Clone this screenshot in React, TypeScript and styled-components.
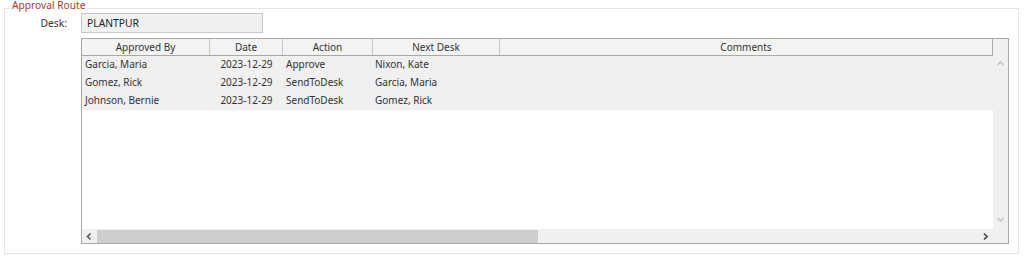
import React from "react";
import styled, { createGlobalStyle } from "styled-components";

const Global = createGlobalStyle`
  html, body { margin: 0; padding: 0; background: #fff; }
  body { font-family: "Noto Sans", "Open Sans", sans-serif; font-size: 10px; color: #333; }
`;

const Section = styled.div`
  position: relative;
  box-sizing: border-box;
  margin: 8px 5px 0 4px;
  height: 246px;
  border: 1px solid #e4e4e4;
  padding: 4px 0 0 0;
`;

const Legend = styled.span`
  position: absolute;
  top: -11px;
  left: 5px;
  padding: 0 2px;
  background: #fff;
  color: #a33a33;
  font-size: 10.2px;
  line-height: 15px;
`;

const DeskRow = styled.div`
  display: flex;
  align-items: center;
  height: 20px;
`;

const Label = styled.div`
  width: 62px;
  text-align: right;
  margin-right: 14px;
  color: #333;
  font-size: 10.3px;
`;

const Input = styled.div`
  box-sizing: border-box;
  width: 182px;
  height: 20px;
  background: #f0f0f0;
  border: 1px solid #c8c8c8;
  padding-left: 5px;
  line-height: 18px;
  color: #222;
  font-size: 10.3px;
`;

const GridBox = styled.div`
  box-sizing: border-box;
  margin: 5px 0 0 76px;
  width: 928px;
  height: 206px;
  border: 1px solid #a8a8a8;
  display: grid;
  grid-template-columns: 1fr 15px;
  grid-template-rows: 1fr 14px;
  background: #fff;
`;

const Main = styled.div`
  display: flex;
  flex-direction: column;
  overflow: hidden;
`;

const cols = "128px 73px 90px 127px 1fr";

const HeaderRow = styled.div`
  display: grid;
  grid-template-columns: ${cols};
  height: 16px;
  background: #f3f3f3;
  border-bottom: 1px solid #a8a8a8;
`;

const HeaderCell = styled.div<{ $last?: boolean }>`
  text-align: center;
  line-height: 16px;
  border-right: 1px solid ${(p) => (p.$last ? "#a8a8a8" : "#c8c8c8")};
  color: #333;
`;

const Row = styled.div`
  display: grid;
  grid-template-columns: ${cols};
  height: 18px;
  background: #f0f0f0;
`;

const Cell = styled.div<{ $center?: boolean; $pad?: number }>`
  line-height: 17px;
  padding-left: ${(p) => (p.$center ? 0 : p.$pad ?? 3)}px;
  text-align: ${(p) => (p.$center ? "center" : "left")};
  white-space: nowrap;
  color: #333;
`;

const VScroll = styled.div`
  background: #f0f0f0;
  display: flex;
  flex-direction: column;
  justify-content: space-between;
  align-items: center;
  padding: 21px 0 5px;
`;

const HScroll = styled.div`
  background: #f0f0f0;
  display: flex;
  align-items: center;
  grid-column: 1 / 2;
`;

const Corner = styled.div`
  background: #f0f0f0;
`;

const Arrow = styled.div`
  width: 15px;
  height: 14px;
  display: flex;
  align-items: center;
  justify-content: center;
  flex: none;
`;

const Thumb = styled.div`
  height: 13px;
  width: 441px;
  background: #cdcdcd;
`;

const Track = styled.div`
  flex: 1;
`;

const rows = [
  ["Garcia, Maria", "2023-12-29", "Approve", "Nixon, Kate"],
  ["Gomez, Rick", "2023-12-29", "SendToDesk", "Garcia, Maria"],
  ["Johnson, Bernie", "2023-12-29", "SendToDesk", "Gomez, Rick"],
];

const Chevron = ({ dir, color }: { dir: "up" | "down" | "left" | "right"; color: string }) => {
  const d = {
    up: "M1.5 5 L4.5 2 L7.5 5",
    down: "M1.5 3 L4.5 6 L7.5 3",
    left: "M5.5 1.5 L2.5 4.5 L5.5 7.5",
    right: "M3 1.5 L6 4.5 L3 7.5",
  }[dir];
  return (
    <svg width="9" height="9" viewBox="0 0 9 9">
      <path d={d} fill="none" stroke={color} strokeWidth="1.6" />
    </svg>
  );
};

export default function App() {
  return (
    <>
      <Global />
      <Section>
        <Legend>Approval Route</Legend>
        <DeskRow>
          <Label>Desk:</Label>
          <Input>PLANTPUR</Input>
        </DeskRow>
        <GridBox>
          <Main>
            <HeaderRow>
              <HeaderCell>Approved By</HeaderCell>
              <HeaderCell>Date</HeaderCell>
              <HeaderCell>Action</HeaderCell>
              <HeaderCell>Next Desk</HeaderCell>
              <HeaderCell $last>Comments</HeaderCell>
            </HeaderRow>
            {rows.map((r) => (
              <Row key={r[0]}>
                <Cell>{r[0]}</Cell>
                <Cell $center>{r[1]}</Cell>
                <Cell>{r[2]}</Cell>
                <Cell $pad={2}>{r[3]}</Cell>
                <Cell />
              </Row>
            ))}
          </Main>
          <VScroll>
            <Chevron dir="up" color="#c4c4c4" />
            <Chevron dir="down" color="#c4c4c4" />
          </VScroll>
          <HScroll>
            <Arrow>
              <Chevron dir="left" color="#555" />
            </Arrow>
            <Thumb />
            <Track />
            <Arrow>
              <Chevron dir="right" color="#444" />
            </Arrow>
          </HScroll>
          <Corner />
        </GridBox>
      </Section>
    </>
  );
}
